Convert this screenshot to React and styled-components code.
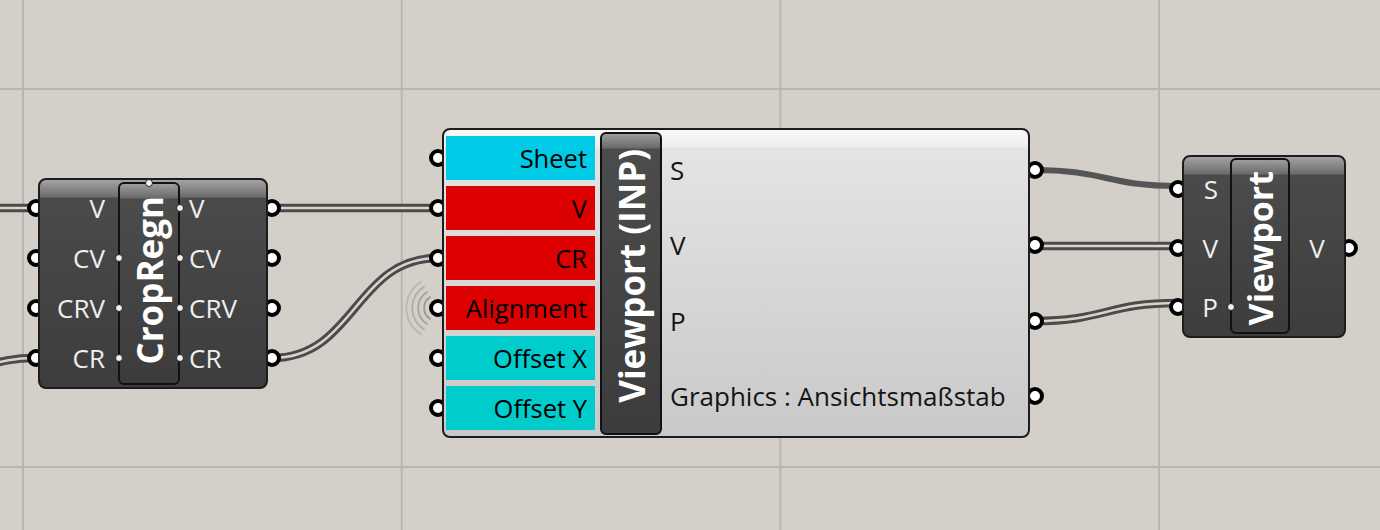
import React from 'react'
import styled, { createGlobalStyle, css } from 'styled-components'

const GlobalStyle = createGlobalStyle`
  html, body {
    margin: 0;
    padding: 0;
  }
  body {
    width: 1380px;
    height: 530px;
    overflow: hidden;
    font-family: "Open Sans", "Noto Sans", sans-serif;
  }
`

const CYAN = '#00cbe6'
const TEAL = '#00cccc'
const RED = '#dd0000'

// wires: grasshopper bezier with horizontal tangents
const wirePath = (x1, y1, x2, y2) => {
  const d = Math.max(40, Math.abs(x2 - x1) * 0.5)
  return `M ${x1} ${y1} C ${x1 + d} ${y1}, ${x2 - d} ${y2}, ${x2} ${y2}`
}

const wires = [
  { d: 'M -20 208 L 34 208', list: true },
  { d: 'M -60 372 C -20 372, -5 358, 34 358', list: true },
  { d: wirePath(272, 208, 438, 208), list: true },
  { d: wirePath(272, 358, 438, 258), list: true },
  { d: wirePath(1034, 170, 1178, 186), list: false },
  { d: wirePath(1034, 246, 1178, 246), list: true },
  { d: wirePath(1034, 321, 1178, 303), list: true },
]

const cropInputs = [
  { label: 'V' },
  { label: 'CV', dot: true },
  { label: 'CRV', dot: true },
  { label: 'CR', dot: true },
]
const cropOutputs = ['V', 'CV', 'CRV', 'CR']

const params = [
  { label: 'Sheet', color: CYAN },
  { label: 'V', color: RED },
  { label: 'CR', color: RED },
  { label: 'Alignment', color: RED },
  { label: 'Offset X', color: TEAL },
  { label: 'Offset Y', color: TEAL },
]
const inpOutputs = ['S', 'V', 'P', 'Graphics : Ansichtsmaßstab']

const App = () => (
  <>
    <GlobalStyle />
    <Canvas>
      <WireLayer width="1380" height="530" viewBox="0 0 1380 530">
        <g fill="none" stroke="#8c8983" strokeWidth="1.8">
          {[13, 19, 25, 31].map((r, i) => (
            <path
              key={r}
              d={`M ${437 - r * 0.5} ${308 - r * 0.86} A ${r} ${r} 0 0 0 ${437 - r * 0.5} ${308 + r * 0.86}`}
              opacity={0.8 - i * 0.15}
            />
          ))}
        </g>
        {wires.map((w, i) =>
          w.list ? (
            <g key={i} fill="none">
              <path d={w.d} stroke="#4b4b4b" strokeWidth="8.5" />
              <path d={w.d} stroke="#d8d4cd" strokeWidth="2.5" />
            </g>
          ) : (
            <path key={i} d={w.d} fill="none" stroke="#555" strokeWidth="6" />
          )
        )}
      </WireLayer>

      {/* CropRegn */}
      <DarkNode style={{ left: 38, top: 178, width: 230, height: 211 }}>
        <PortCol $w={78} $pad="3px 0 4px">
          {cropInputs.map((p) => (
            <Port key={p.label} $align="right" $padR={13}>
              <Grip $side="left" $off={-13} />
              <Label>{p.label}</Label>
              {p.dot && <Dot $side="right" />}
            </Port>
          ))}
        </PortCol>
        <Capsule $w={62} $m="2px 0">
          <TopDot />
          <Title $lift={3}>CropRegn</Title>
        </Capsule>
        <PortCol $w={86} $pad="3px 0 4px">
          {cropOutputs.map((l) => (
            <Port key={l} $padL={9}>
              <Dot $side="left" />
              <Label>{l}</Label>
              <Grip $side="right" $off={-15} />
            </Port>
          ))}
        </PortCol>
      </DarkNode>

      {/* Viewport (INP) */}
      <LightNode style={{ left: 442, top: 128, width: 588, height: 310 }}>
        <ParamCol>
          {params.map((p) => (
            <Param key={p.label} $color={p.color}>
              <Grip $side="left" $off={-17} />
              {p.label}
            </Param>
          ))}
        </ParamCol>
        <Capsule $w={62} $m="2px 0 1px 5px">
          <Title $lift={8}>Viewport (INP)</Title>
        </Capsule>
        <PortCol $w={368} $pad="2px 0">
          {inpOutputs.map((l) => (
            <Port key={l} $padL={8} $dark>
              <Label>{l}</Label>
              <Grip $side="right" $off={-16} />
            </Port>
          ))}
        </PortCol>
      </LightNode>

      {/* Viewport */}
      <DarkNode style={{ left: 1182, top: 155, width: 164, height: 183 }}>
        <PortCol $w={46} $pad="2px 0 0">
          {['S', 'V', 'P'].map((l) => (
            <Port key={l} $align="right" $padR={12}>
              <Grip $side="left" $off={-15} />
              <Label>{l}</Label>
              {l === 'P' && <Dot $side="right" />}
            </Port>
          ))}
        </PortCol>
        <Capsule $w={60} $m="1px 0 2px">
          <Title $size={34} $lift={-2}>Viewport</Title>
        </Capsule>
        <PortCol $w={54} $pad="2px 0 0">
          <Port $align="center">
            <Label>V</Label>
            <Grip $side="right" $off={-14} />
          </Port>
        </PortCol>
      </DarkNode>
    </Canvas>
  </>
)

const Canvas = styled.div`
  position: relative;
  width: 1380px;
  height: 530px;
  overflow: hidden;
  isolation: isolate;
  background-color: #d4d0c9;
  background-image: linear-gradient(to right, #bab6ae 2px, transparent 2px),
    linear-gradient(to bottom, #bab6ae 2px, transparent 2px);
  background-size: 378.7px 100%, 100% 378px;
  background-position: 22px 0, 0 88px;
`

const WireLayer = styled.svg`
  position: absolute;
  left: 0;
  top: 0;
  z-index: -2;
`

const nodeBase = css`
  position: absolute;
  box-sizing: border-box;
  display: flex;
  border: 2px solid #1c1c1c;
  border-radius: 8px;
`

const DarkNode = styled.div`
  ${nodeBase}
  background: linear-gradient(
    to bottom,
    #a3a3a3 0px,
    #6c6c6c 17px,
    #4a4a4a 18px,
    #3d3d3d 100%
  );
`

const LightNode = styled.div`
  ${nodeBase}
  background: linear-gradient(
    to bottom,
    #f8f8f8 0px,
    #eeeeee 17px,
    #e4e4e4 18px,
    #c9c9c9 100%
  );
`

const PortCol = styled.div`
  position: relative;
  width: ${(p) => p.$w}px;
  display: flex;
  flex-direction: column;
  padding: ${(p) => p.$pad};
  box-sizing: border-box;
`

const Port = styled.div`
  position: relative;
  flex: 1;
  display: flex;
  align-items: center;
  justify-content: ${(p) =>
    p.$align === 'right' ? 'flex-end' : p.$align === 'center' ? 'center' : 'flex-start'};
  padding-right: ${(p) => p.$padR || 0}px;
  padding-left: ${(p) => p.$padL || 0}px;
  color: ${(p) => (p.$dark ? '#141414' : '#efefef')};
`

const Label = styled.span`
  font-size: 26px;
  line-height: 1;
  white-space: nowrap;
`

const Grip = styled.span`
  position: absolute;
  top: 50%;
  ${(p) => p.$side}: ${(p) => p.$off}px;
  width: 18px;
  height: 18px;
  margin-top: -9px;
  box-sizing: border-box;
  border-radius: 50%;
  border: 4px solid #000;
  background: #fff;
  z-index: -1;
`

const Dot = styled.span`
  position: absolute;
  top: 50%;
  ${(p) => p.$side}: -4.5px;
  width: 8px;
  height: 8px;
  margin-top: -4px;
  box-sizing: border-box;
  border-radius: 50%;
  border: 1.5px solid #222;
  background: #f0f0f0;
  z-index: 1;
`

const TopDot = styled.span`
  position: absolute;
  top: -5px;
  left: 50%;
  width: 8px;
  height: 8px;
  margin-left: -4px;
  box-sizing: border-box;
  border-radius: 50%;
  border: 1.5px solid #222;
  background: #f0f0f0;
`

const Capsule = styled.div`
  position: relative;
  flex: none;
  width: ${(p) => p.$w}px;
  margin: ${(p) => p.$m};
  box-sizing: border-box;
  border: 2px solid #111;
  border-radius: 6px;
  background: linear-gradient(
    to bottom,
    #9c9c9c 0px,
    #6a6a6a 14px,
    #4c4c4c 15px,
    #3c3c3c 100%
  );
  display: flex;
  align-items: center;
  justify-content: center;
`

const Title = styled.span`
  writing-mode: vertical-rl;
  transform: rotate(180deg);
  margin-bottom: ${(p) => (p.$lift || 0) * 2}px;
  color: #fff;
  font-weight: 700;
  font-size: ${(p) => p.$size || 35}px;
  line-height: 1;
  white-space: nowrap;
`

const ParamCol = styled.div`
  display: flex;
  flex-direction: column;
  gap: 6px;
  padding: 6px 0 0 2px;
  width: 149px;
  flex: none;
`

const Param = styled.div`
  position: relative;
  height: 44px;
  background: ${(p) => p.$color};
  display: flex;
  align-items: center;
  justify-content: flex-end;
  padding-right: 8px;
  font-size: 25.5px;
  color: #000;
  white-space: nowrap;
`

export default App
